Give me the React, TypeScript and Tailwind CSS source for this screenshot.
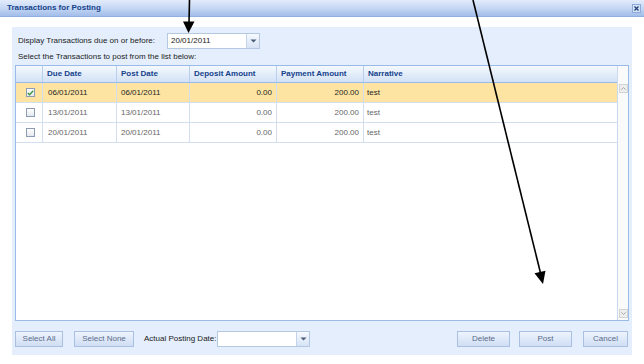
import type { ReactNode } from 'react'

type Row = {
  due: string
  post: string
  deposit: string
  payment: string
  narrative: string
  checked: boolean
}

const ROWS: Row[] = [
  { due: '06/01/2011', post: '06/01/2011', deposit: '0.00', payment: '200.00', narrative: 'test', checked: true },
  { due: '13/01/2011', post: '13/01/2011', deposit: '0.00', payment: '200.00', narrative: 'test', checked: false },
  { due: '20/01/2011', post: '20/01/2011', deposit: '0.00', payment: '200.00', narrative: 'test', checked: false },
]

const COLS = 'grid grid-cols-[27px_74px_73px_87px_87px_1fr]'

function DropArrow() {
  return (
    <svg width="7" height="4" viewBox="0 0 7 4">
      <path d="M0.5 0.5h6l-3 3z" fill="#4a5a78" />
    </svg>
  )
}

function DateField({ value, width }: { value: string; width: string }) {
  return (
    <div className={`flex h-[16px] ${width} border border-[#b5c8e2] bg-white`}>
      <div className="flex flex-1 items-center pl-[3px] text-[8px] text-[#222]">{value}</div>
      <div className="flex w-[13px] items-center justify-center border-l border-[#c3d3ea] bg-gradient-to-b from-[#f7faff] to-[#d6e3f5]">
        <DropArrow />
      </div>
    </div>
  )
}

function Button({ children, width }: { children: ReactNode; width: string }) {
  return (
    <button
      type="button"
      className={`flex h-[16px] ${width} items-center justify-center border border-[#a9c0e2] bg-gradient-to-b from-[#eef4fd] to-[#cfdef4] text-[8px] text-[#5b6c8a]`}
    >
      {children}
    </button>
  )
}

function CheckBox({ checked }: { checked: boolean }) {
  return (
    <div className="flex h-[9px] w-[9px] items-center justify-center border border-[#8d9bb3] bg-gradient-to-b from-white to-[#e4e8ee]">
      {checked && (
        <svg width="7" height="6" viewBox="0 0 7 6">
          <path d="M0.8 3l1.8 1.8L6.2 0.8" fill="none" stroke="#3f9a3f" strokeWidth="1.4" />
        </svg>
      )}
    </div>
  )
}

function Grid() {
  const headers = ['Due Date', 'Post Date', 'Deposit Amount', 'Payment Amount', 'Narrative']
  return (
    <div className="mx-[3px] mt-[3px] flex h-[256px] border border-[#99bbe8] bg-white">
      <div className="flex flex-1 flex-col">
        {/* header */}
        <div className={`${COLS} h-[17px] border-b border-[#99bbe8] bg-gradient-to-b from-[#f5f9fe] to-[#d2e1f6]`}>
          <div className="border-r border-[#b9cfee]" />
          {headers.map((h, i) => (
            <div
              key={h}
              className={`flex items-center pl-[4px] text-[8px] font-bold text-[#15428b] ${i < 4 ? 'border-r border-[#b9cfee]' : ''}`}
            >
              {h}
            </div>
          ))}
        </div>
        {/* rows */}
        {ROWS.map((r) => (
          <div
            key={r.due}
            className={`${COLS} h-[20px] border-b border-[#d3dfef] text-[8px] ${
              r.checked ? 'bg-[#fde4a2] text-[#1d1d1d]' : 'bg-white text-[#666]'
            }`}
          >
            <div className="flex items-center justify-center border-r border-[#d3dfef] pl-[2px]">
              <CheckBox checked={r.checked} />
            </div>
            <div className="flex items-center border-r border-[#d3dfef] pl-[5px]">{r.due}</div>
            <div className="flex items-center border-r border-[#d3dfef] pl-[4px]">{r.post}</div>
            <div className="flex items-center justify-end border-r border-[#d3dfef] pr-[4px]">{r.deposit}</div>
            <div className="flex items-center justify-end border-r border-[#d3dfef] pr-[4px]">{r.payment}</div>
            <div className="flex items-center pl-[3px]">{r.narrative}</div>
          </div>
        ))}
      </div>
      {/* scrollbar */}
      <div className="flex w-[11px] flex-col items-center border-l border-[#c9d9ef] bg-[#fafafa] pt-[18px] pb-[2px]">
        <div className="flex h-[9px] w-[9px] items-center justify-center border border-[#d4d4d4] bg-[#eeeeee]">
          <svg width="5" height="3" viewBox="0 0 5 3">
            <path d="M0.3 2.7L2.5 0.5l2.2 2.2" fill="none" stroke="#a0a0a0" strokeWidth="0.9" />
          </svg>
        </div>
        <div className="flex-1" />
        <div className="flex h-[9px] w-[9px] items-center justify-center border border-[#d4d4d4] bg-[#eeeeee]">
          <svg width="5" height="3" viewBox="0 0 5 3">
            <path d="M0.3 0.3L2.5 2.5l2.2-2.2" fill="none" stroke="#a0a0a0" strokeWidth="0.9" />
          </svg>
        </div>
      </div>
    </div>
  )
}

export default function App() {
  return (
    <div className="relative h-[364px] w-[644px] overflow-hidden bg-white font-['Liberation_Sans',Arial,sans-serif]">
      {/* title bar */}
      <div className="flex h-[17px] items-center border-b border-[#8fb0e0] bg-gradient-to-b from-[#e2ecfb] via-[#c6d8f4] to-[#a2bde9] pl-[7px] pr-[3px]">
        <span className="text-[8px] font-bold text-[#15428b]">Transactions for Posting</span>
        <div className="ml-auto flex h-[9px] w-[9px] items-center justify-center border border-[#8eaad6] bg-[#d4e2f7]">
          <svg width="5" height="5" viewBox="0 0 5 5">
            <path d="M0.5 0.5l4 4M4.5 0.5l-4 4" stroke="#1f3f78" strokeWidth="1.3" />
          </svg>
        </div>
      </div>

      {/* panel */}
      <div className="mx-[12px] mt-[10px] flex h-[328px] flex-col bg-[#e4eefc] pt-[6px]">
        <div className="flex h-[16px] items-center pl-[6px]">
          <span className="w-[149px] text-[8px] text-[#222]">Display Transactions due on or before:</span>
          <DateField value="20/01/2011" width="w-[93px]" />
        </div>
        <div className="mt-[3px] flex h-[10px] items-center pl-[6px] text-[8px] text-[#222]">
          Select the Transactions to post from the list below:
        </div>

        <Grid />

        <div className="mt-[10px] flex h-[16px] items-center pl-[3px] pr-[4px]">
          <Button width="w-[48px]">Select All</Button>
          <div className="ml-[11px]">
            <Button width="w-[60px]">Select None</Button>
          </div>
          <span className="ml-[10px] w-[73px] text-[8px] text-[#222]">Actual Posting Date:</span>
          <DateField value="" width="w-[93px]" />
          <div className="ml-auto flex items-center">
            <Button width="w-[53px]">Delete</Button>
            <div className="ml-[9px]">
              <Button width="w-[53px]">Post</Button>
            </div>
            <div className="ml-[11px]">
              <Button width="w-[45px]">Cancel</Button>
            </div>
          </div>
        </div>
      </div>

      {/* annotation arrows drawn over the dialog */}
      <svg className="pointer-events-none absolute left-0 top-0" width="644" height="364" viewBox="0 0 644 364">
        <path d="M189.5 0L189 23" stroke="#000" strokeWidth="1.6" fill="none" />
        <path d="M183 21.5L194.5 21.5L188.5 33z" fill="#000" />
        <path d="M473 0L540.5 273" stroke="#000" strokeWidth="1.6" fill="none" />
        <path d="M534.5 273.3L545.5 270.7L543 284z" fill="#000" />
      </svg>
    </div>
  )
}
